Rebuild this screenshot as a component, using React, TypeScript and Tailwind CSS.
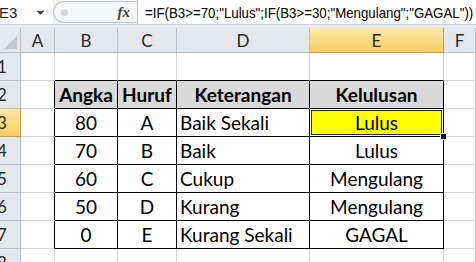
import { ChevronDown } from 'lucide-react';

const rows = [
  { n: '80', h: 'A', k: 'Baik Sekali', l: 'Lulus' },
  { n: '70', h: 'B', k: 'Baik', l: 'Lulus' },
  { n: '60', h: 'C', k: 'Cukup', l: 'Mengulang' },
  { n: '50', h: 'D', k: 'Kurang', l: 'Mengulang' },
  { n: '0', h: 'E', k: 'Kurang Sekali', l: 'GAGAL' },
];

const cols = ['A', 'B', 'C', 'D', 'E', 'F'];

const grid = 'border-r border-b border-[#d4d4d4]';
const tbl = 'border-r border-b border-black';
const cellFont = "font-['Lato',sans-serif] text-[19px] leading-none text-black";

function RowHead({ label, active }: { label: string; active?: boolean }) {
  return (
    <div
      className={
        active
          ? 'flex items-end overflow-hidden border-r border-b border-[#c89a45] bg-gradient-to-b from-[#fde8a4] to-[#f8d062] pb-[5px]'
          : 'flex items-end overflow-hidden border-r border-b border-[#b9bec6] bg-[#e4e7eb] pb-[5px]'
      }
    >
      <span className="-ml-[15px] w-[34px] text-center font-['Lato',sans-serif] text-[17px] leading-none text-[#2a2a2a]">
        {label}
      </span>
    </div>
  );
}

export default function App() {
  return (
    <div className="h-[262px] w-[476px] overflow-hidden bg-white">
      {/* formula bar */}
      <div className="flex h-[25px] border-b border-[#cdd2d8] bg-white">
        <div className="flex w-[53px] items-center justify-between pr-[7px]">
          <span className="-ml-[1px] font-['Liberation_Sans',sans-serif] text-[15px] leading-none text-[#222]">E3</span>
          <ChevronDown className="h-[11px] w-[11px] fill-[#333] text-[#333]" strokeWidth={3} />
        </div>
        <div className="flex w-[84px] items-center bg-[#f1f2f4]">
          <div className="flex h-[22px] w-full items-center rounded-l-full border border-r-0 border-[#c3c8cf] bg-[#f6f7f8] pl-[7px]">
            <span className="h-[7px] w-[7px] rounded-full bg-[#d5d9de]" />
            <span className="ml-auto mr-[7px] font-['Liberation_Serif',serif] text-[15px] font-bold italic leading-none text-[#444]">
              fx
            </span>
          </div>
        </div>
        <div className="flex flex-1 items-center overflow-hidden whitespace-nowrap border-l border-[#c3c8cf] pl-[7px]">
          <span className="origin-left scale-x-[0.885] font-['Liberation_Sans',sans-serif] text-[15px] leading-none text-black">
            =IF(B3&gt;=70;"Lulus";IF(B3&gt;=30;"Mengulang";"GAGAL"))
          </span>
        </div>
      </div>
      <div className="h-[3px] bg-[#e8ebef]" />

      {/* sheet */}
      <div className="grid grid-cols-[21px_34px_63px_59px_133px_134px_32px] grid-rows-[25px_repeat(8,28px)]">
        {/* column headers */}
        <div className="relative border-r border-b border-[#b9bec6] bg-[#e4e7eb]">
          <svg className="absolute bottom-[3px] right-[3px]" width="13" height="13" viewBox="0 0 13 13">
            <polygon points="13,0 13,13 0,13" fill="#c4c9cf" />
          </svg>
        </div>
        {cols.map((c) => (
          <div
            key={c}
            className={
              c === 'E'
                ? 'flex items-center justify-center border-r border-b border-[#c89a45] bg-gradient-to-b from-[#fde8a4] to-[#f8d062]'
                : 'flex items-center justify-center border-r border-b border-[#b9bec6] bg-[#e4e7eb]'
            }
          >
            <span className="font-['Lato',sans-serif] text-[17px] leading-none text-[#2a2a2a]">{c}</span>
          </div>
        ))}

        {/* row 1 */}
        <RowHead label="1" />
        <div className={grid} />
        <div className="border-r border-b border-r-[#d4d4d4] border-b-black" />
        <div className="border-r border-b border-r-[#d4d4d4] border-b-black" />
        <div className="border-r border-b border-r-[#d4d4d4] border-b-black" />
        <div className="border-r border-b border-r-[#d4d4d4] border-b-black" />
        <div className={grid} />

        {/* row 2: table header */}
        <RowHead label="2" />
        <div className="border-r border-b border-r-black border-b-[#d4d4d4]" />
        {['Angka', 'Huruf', 'Keterangan', 'Kelulusan'].map((t) => (
          <div key={t} className={`${tbl} flex items-end justify-center bg-[#d9d9d9] pb-[4px]`}>
            <span className={`${cellFont} font-bold`}>{t}</span>
          </div>
        ))}
        <div className={grid} />

        {/* rows 3-7 */}
        {rows.map((r, i) => (
          <div key={r.n} className="contents">
            <RowHead label={String(i + 3)} active={i === 0} />
            <div className="border-r border-b border-r-black border-b-[#d4d4d4]" />
            <div className={`${tbl} flex items-end justify-center pb-[4px]`}>
              <span className={cellFont}>{r.n}</span>
            </div>
            <div className={`${tbl} flex items-end justify-center pb-[4px]`}>
              <span className={cellFont}>{r.h}</span>
            </div>
            <div className={`${tbl} flex items-end pb-[4px] pl-[3px]`}>
              <span className={`${cellFont} whitespace-nowrap`}>{r.k}</span>
            </div>
            {i === 0 ? (
              <div className={`${tbl} relative flex items-end justify-center bg-[#ffff00] pb-[4px] shadow-[inset_0_0_0_1px_#ffffff,inset_0_0_0_2px_#1c1ce0]`}>
                <span className={cellFont}>{r.l}</span>
                <span className="absolute -bottom-[4px] -right-[4px] z-10 h-[7px] w-[7px] border border-white bg-black" />
              </div>
            ) : (
              <div className={`${tbl} flex items-end justify-center pb-[4px]`}>
                <span className={cellFont}>{r.l}</span>
              </div>
            )}
            <div className={grid} />
          </div>
        ))}

        {/* row 8 */}
        <RowHead label="8" />
        <div className={grid} />
        <div className={grid} />
        <div className={grid} />
        <div className={grid} />
        <div className={grid} />
        <div className={grid} />
      </div>
    </div>
  );
}
